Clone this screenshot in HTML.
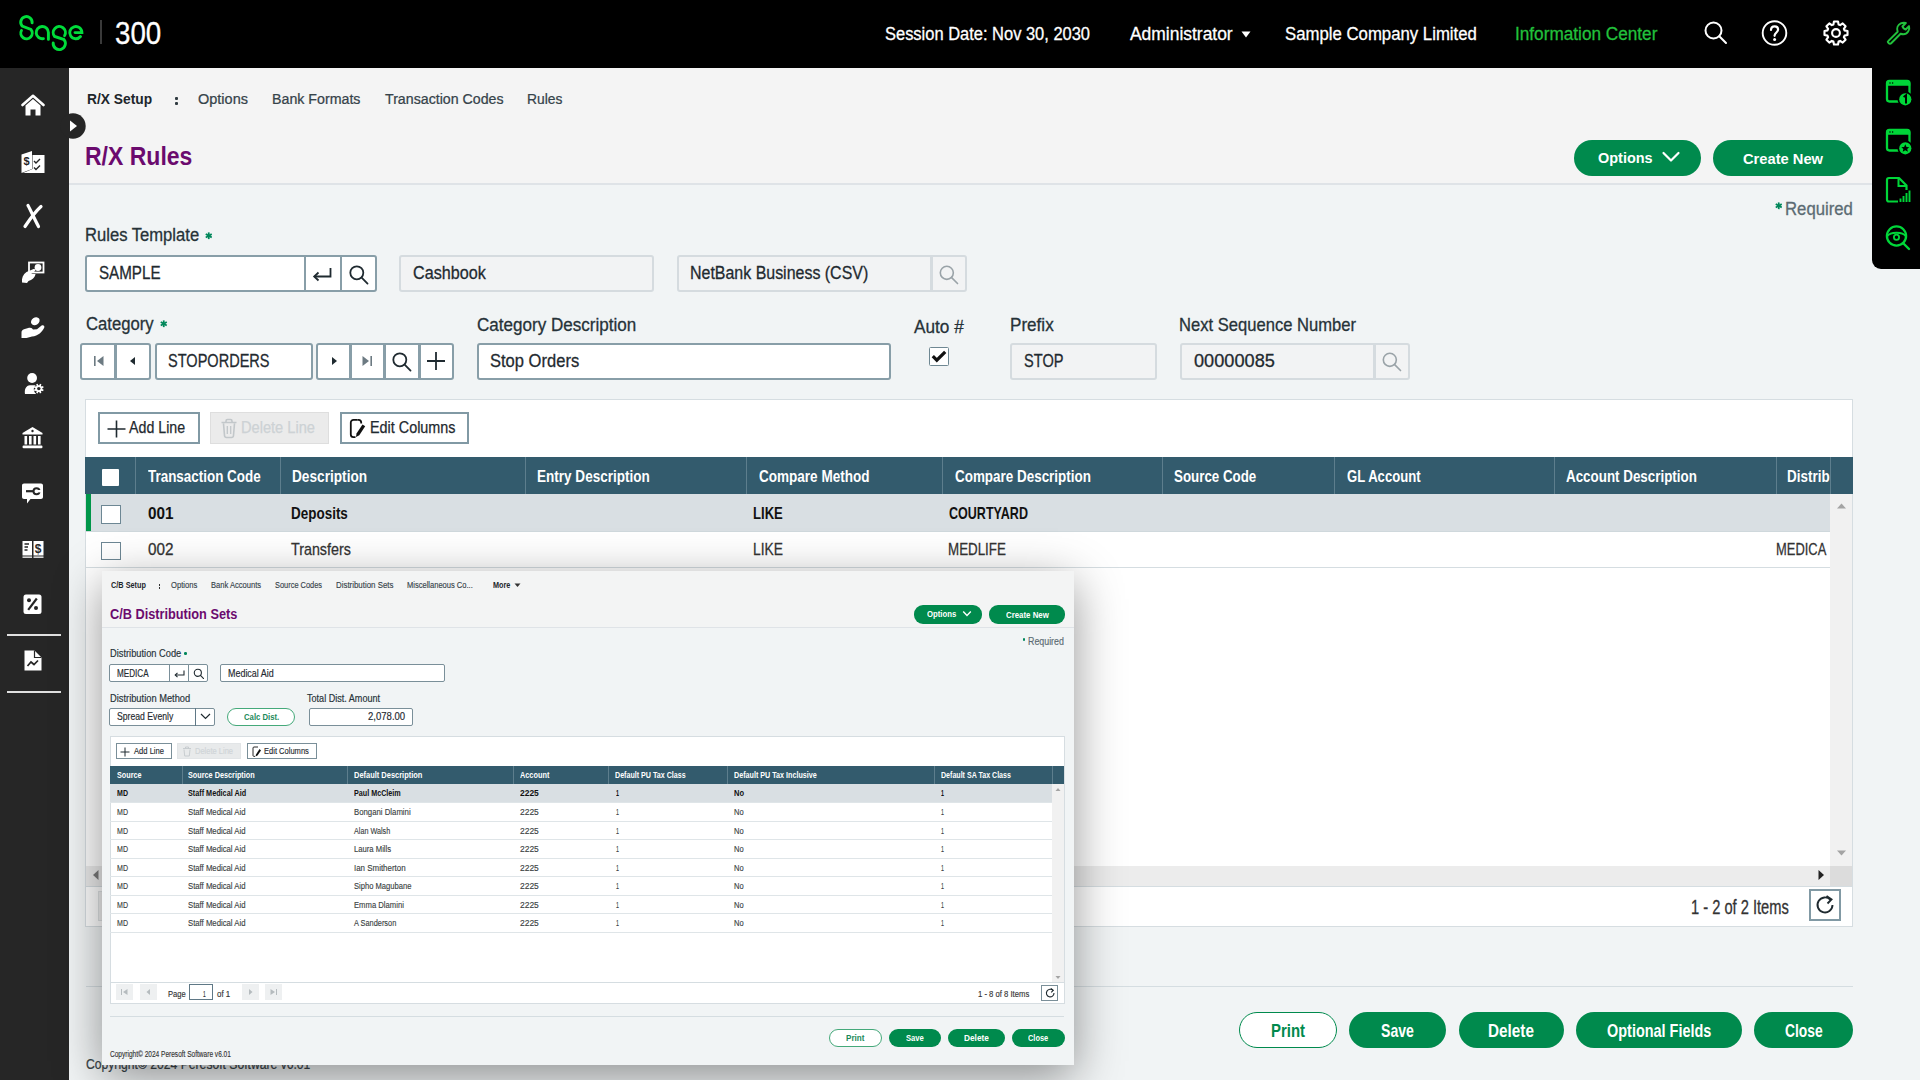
<!DOCTYPE html>
<html><head><meta charset="utf-8"><title>R/X Rules</title>
<style>
html,body{margin:0;padding:0;width:1920px;height:1080px;overflow:hidden;background:#f1f4f5;font-family:"Liberation Sans",sans-serif;position:relative}
.a{position:absolute;box-sizing:border-box;display:block}
.t{position:absolute;white-space:nowrap;line-height:1;transform-origin:0 0;font-family:"Liberation Sans",sans-serif}
#pop{position:absolute;left:102px;top:571px;width:972px;height:494px;background:#f1f4f5;box-shadow:0 12px 45px rgba(0,0,0,0.42);overflow:hidden}
</style></head><body>
<div class="a" style="left:0.00px;top:0.00px;width:1920.00px;height:68.00px;background:#000"></div>
<svg class="a" style="left:0.00px;top:0.00px;" width="100" height="60" viewBox="0 0 100 60"><g fill="none" stroke="#00dc3a" stroke-width="2.9" stroke-linecap="round">
<path d="M32.1 22.8 A5.7 5.7 0 1 0 22.1 26.0 L30.9 29.5 A5.7 5.7 0 1 1 21.5 30.4"/>
<path d="M43.4 38.6 A6.1 6.1 0 1 1 48.4 32.6 V39.4"/>
<path d="M64.6 35.65 A6.1 6.1 0 1 0 54.6 36.5 L64 39.6 A6.1 6.1 0 1 1 53.2 43.0"/>
<path d="M75 32.6 H81.9 A6.1 6.1 0 1 0 80.5 36.5"/>
</g></svg>
<div class="a" style="left:99.50px;top:20.00px;width:2.00px;height:24.00px;background:#3a3a3a"></div>
<span class="t" style="left:114.69px;top:18.32px;font-size:30.52px;font-weight:300;color:#ffffff;transform:scaleX(0.9092);-webkit-text-stroke:0.30px currentColor">300</span>
<span class="t" style="left:885.00px;top:24.68px;font-size:18.90px;font-weight:400;color:#ffffff;transform:scaleX(0.8716);-webkit-text-stroke:0.30px currentColor">Session Date:  Nov 30, 2030</span>
<span class="t" style="left:1129.75px;top:24.68px;font-size:18.90px;font-weight:400;color:#ffffff;transform:scaleX(0.9225);-webkit-text-stroke:0.30px currentColor">Administrator</span>
<svg class="a" style="left:1241.00px;top:31.00px;" width="10" height="7" viewBox="0 0 10 7"><path d="M0.5 0.5 H9.5 L5 6.5 Z" fill="#fff"/></svg>
<span class="t" style="left:1285.00px;top:24.68px;font-size:18.90px;font-weight:400;color:#ffffff;transform:scaleX(0.8872);-webkit-text-stroke:0.30px currentColor">Sample Company Limited</span>
<span class="t" style="left:1515.49px;top:24.68px;font-size:18.90px;font-weight:400;color:#22c13c;transform:scaleX(0.9101);-webkit-text-stroke:0.30px currentColor">Information Center</span>
<svg class="a" style="left:1703.00px;top:20.00px;" width="27" height="26" viewBox="0 0 27 26"><circle cx="10.5" cy="10.5" r="8" fill="none" stroke="#fff" stroke-width="2"/><path d="M16.3 16.3 L23 23" stroke="#fff" stroke-width="2" stroke-linecap="round"/></svg>
<svg class="a" style="left:1760.00px;top:19.00px;" width="29" height="29" viewBox="0 0 29 29"><circle cx="14.5" cy="14" r="11.8" fill="none" stroke="#fff" stroke-width="1.9"/><path d="M11 11 C11 8.7 12.6 7.3 14.6 7.3 C16.7 7.3 18.1 8.7 18.1 10.6 C18.1 13.2 14.9 13.6 14.6 16.3 V16.8" fill="none" stroke="#fff" stroke-width="2.2" stroke-linecap="round"/><circle cx="14.6" cy="20.4" r="1.5" fill="#fff"/></svg>
<svg class="a" style="left:1822.80px;top:19.70px;" width="26" height="26" viewBox="0 0 26 26"><polygon points="21.51,10.40 24.52,10.97 24.52,15.03 21.51,15.60 20.86,17.18 22.58,19.71 19.71,22.58 17.18,20.86 15.60,21.51 15.03,24.52 10.97,24.52 10.40,21.51 8.82,20.86 6.29,22.58 3.42,19.71 5.14,17.18 4.49,15.60 1.48,15.03 1.48,10.97 4.49,10.40 5.14,8.82 3.42,6.29 6.29,3.42 8.82,5.14 10.40,4.49 10.97,1.48 15.03,1.48 15.60,4.49 17.18,5.14 19.71,3.42 22.58,6.29 20.86,8.82" fill="none" stroke="#fff" stroke-width="2.1" stroke-linejoin="round"/><circle cx="13" cy="13" r="3.9" fill="none" stroke="#fff" stroke-width="2.1"/></svg>
<svg class="a" style="left:1884.00px;top:19.00px;" width="28" height="27" viewBox="0 0 28 27"><g transform="translate(1.5 1) scale(0.9)"><path d="M3 23.5 L13.5 13 C12.2 9.5 13.5 5.5 17 3.8 C19 2.8 21 2.8 22.6 3.3 L18.8 7.2 L20.2 9.3 L22.4 10.6 L26.1 6.8 C26.7 8.8 26.4 11 25.2 12.8 C23.3 15.6 19.8 16.4 16.8 15.3 L6.3 25.8 C5.6 26.5 4.4 26.5 3.7 25.8 L3 25.1 C2.4 24.6 2.4 24 3 23.5 Z" fill="none" stroke="#22c13c" stroke-width="2.2" stroke-linejoin="round"/></g></svg>
<div class="a" style="left:0.00px;top:68.00px;width:69.00px;height:1012.00px;background:#262626"></div>
<svg class="a" style="left:21.00px;top:94.00px;" width="24" height="23" viewBox="0 0 24 23"><path d="M1.5 11 L12 1.8 L22.5 11" fill="none" stroke="#fff" stroke-width="2.6" stroke-linecap="round" stroke-linejoin="round"/><path d="M4.5 11.5 L12 5 L19.5 11.5 V21.5 H14.5 V15.5 H9.5 V21.5 H4.5 Z" fill="#fff"/></svg>
<svg class="a" style="left:20.00px;top:149.00px;" width="26" height="26" viewBox="0 0 26 26"><path d="M1.5 5.5 L12 2 V20 L1.5 24 Z" fill="#fff"/><path d="M12.5 6 H24.5 V24 H3 L12.5 20 Z" fill="#fff"/><text x="3.5" y="15.5" font-size="11" font-family="Liberation Sans" font-weight="bold" fill="#262626">$</text><path d="M14 12 L16 14 L20 10 M14 18.5 L16 20.5 L20 16.5" stroke="#262626" stroke-width="1.4" fill="none"/></svg>
<svg class="a" style="left:22.00px;top:203.00px;" width="22" height="26" viewBox="0 0 22 26"><path d="M6 2.5 C9 8 13 17 16.5 23.5" stroke="#fff" stroke-width="3.2" stroke-linecap="round" fill="none"/><path d="M19 3.5 C14 8 8 16 3 23.5" stroke="#fff" stroke-width="3.2" stroke-linecap="round" fill="none"/></svg>
<svg class="a" style="left:20.00px;top:261.00px;" width="26" height="23" viewBox="0 0 26 23"><rect x="9" y="1.5" width="14.5" height="10" fill="none" stroke="#fff" stroke-width="1.8"/><circle cx="18" cy="6.5" r="3.4" fill="#fff"/><path d="M2 21.5 C1.5 17 3 13.5 6.5 11 L13.5 8 C15.5 7.5 16 9.5 14.5 10.5 L11 13 H15.5 C15 16.5 12 19 8.5 20 L7 22 Z" fill="#fff"/></svg>
<svg class="a" style="left:20.00px;top:315.00px;" width="26" height="25" viewBox="0 0 26 25"><ellipse cx="15.3" cy="6.2" rx="4.6" ry="3.7" transform="rotate(-35 15.3 6.2)" fill="#fff"/><path d="M1.5 23 V17.5 C1.5 15.8 2.5 14.8 4 14.3 L9 12.8 C11 12.3 12.5 13.2 13 14.6 L17 14.3 L21.3 10.8 C22.8 9.7 24.8 10.6 24.3 12.5 C22.6 16.7 18 21 12 21.6 L6.5 23 Z" fill="#fff"/></svg>
<svg class="a" style="left:23.00px;top:371.00px;" width="24" height="25" viewBox="0 0 24 25"><circle cx="9.1" cy="7" r="4.9" fill="#fff"/><path d="M2 23 C1.2 18.5 3 14.5 7 14.2 H12.8 C11.6 15.3 10.8 16.6 10.8 18.2 C10.8 20.2 11.8 21.9 13.3 23 Z" fill="#fff"/><polygon points="19.27,18.06 20.66,18.77 20.06,20.21 18.58,19.73 17.93,20.38 18.41,21.86 16.97,22.46 16.26,21.07 15.34,21.07 14.63,22.46 13.19,21.86 13.67,20.38 13.02,19.73 11.54,20.21 10.94,18.77 12.33,18.06 12.33,17.14 10.94,16.43 11.54,14.99 13.02,15.47 13.67,14.82 13.19,13.34 14.63,12.74 15.34,14.13 16.26,14.13 16.97,12.74 18.41,13.34 17.93,14.82 18.58,15.47 20.06,14.99 20.66,16.43 19.27,17.14" fill="#fff"/><circle cx="15.8" cy="17.6" r="1.7" fill="#262626"/></svg>
<svg class="a" style="left:21.00px;top:426.00px;" width="23" height="23" viewBox="0 0 23 23"><path d="M1.5 7 L11.5 1 L21.5 7 V8.5 H1.5 Z" fill="#fff"/><rect x="3.5" y="10" width="2.6" height="8.5" fill="#fff"/><rect x="8" y="10" width="2.6" height="8.5" fill="#fff"/><rect x="12.5" y="10" width="2.6" height="8.5" fill="#fff"/><rect x="17" y="10" width="2.6" height="8.5" fill="#fff"/><rect x="1.5" y="19.5" width="20" height="2.8" rx="1.2" fill="#fff"/><circle cx="11.5" cy="5" r="1.2" fill="#262626"/></svg>
<svg class="a" style="left:21.00px;top:482.00px;" width="23" height="24" viewBox="0 0 23 24"><path d="M3 1.5 H20 C21.2 1.5 22 2.3 22 3.5 V15 C22 16.2 21.2 17 20 17 H9.5 L6 21.5 V17 H3 C1.8 17 1 16.2 1 15 V3.5 C1 2.3 1.8 1.5 3 1.5 Z" fill="#fff"/><path d="M5 9.2 H13" stroke="#262626" stroke-width="2.2"/><circle cx="15.5" cy="9.2" r="3" fill="none" stroke="#262626" stroke-width="2"/><rect x="16.5" y="8" width="4" height="2.4" fill="#fff"/></svg>
<svg class="a" style="left:21.00px;top:539.00px;" width="24" height="20" viewBox="0 0 24 20"><path d="M1.5 2 H11 V16.5 H1.5 Z M12.5 2 H22.5 V16.5 H12.5 Z" fill="#fff"/><rect x="1.5" y="17.5" width="9.5" height="1.3" fill="#fff"/><rect x="12.5" y="17.5" width="10" height="1.3" fill="#fff"/><path d="M3.5 5 H8 M3.5 8 H7 M3.5 11 H6.5" stroke="#262626" stroke-width="1.3"/><text x="13.8" y="14" font-size="12" font-weight="bold" font-family="Liberation Sans" fill="#262626">$</text></svg>
<svg class="a" style="left:22.00px;top:593.00px;" width="21" height="23" viewBox="0 0 21 23"><rect x="1.5" y="1.5" width="18" height="19.5" rx="2.5" fill="#fff"/><circle cx="7" cy="7.3" r="2" fill="#262626"/><circle cx="14" cy="15" r="2" fill="#262626"/><path d="M14.8 5.5 L6.2 16.8" stroke="#262626" stroke-width="2.2"/></svg>
<div class="a" style="left:7.00px;top:633.50px;width:54.00px;height:2.00px;background:#e0e0e0"></div>
<svg class="a" style="left:23.00px;top:649.00px;" width="20" height="23" viewBox="0 0 20 23"><path d="M1.5 1.5 H11.5 L18.5 8.5 V21.5 H1.5 Z" fill="#fff"/><path d="M11.5 1.5 V8.5 H18.5" fill="none" stroke="#262626" stroke-width="1.2"/><path d="M4.5 17 L8 13 L11 15.5 L15 11.5" fill="none" stroke="#262626" stroke-width="1.7"/></svg>
<div class="a" style="left:7.00px;top:690.50px;width:54.00px;height:2.00px;background:#e0e0e0"></div>
<div class="a" style="left:69.00px;top:68.00px;width:1803.00px;height:116.00px;background:#f4f4f4"></div>
<div class="a" style="left:69.00px;top:183.30px;width:1803.00px;height:1.50px;background:#dfe3e7"></div>
<svg class="a" style="left:59.50px;top:113.00px;" width="26" height="26" viewBox="0 0 26 26"><circle cx="13" cy="13" r="12.7" fill="#262626"/><path d="M10 7.5 L17 13 L10 18.5 Z" fill="#fff"/></svg>
<span class="t" style="left:86.82px;top:92.07px;font-size:14.90px;font-weight:700;color:#1d262b;transform:scaleX(0.9268)">R/X Setup</span>
<div class="a" style="left:175.00px;top:97.30px;width:3.30px;height:3.00px;background:#303b41;border-radius:1px"></div>
<div class="a" style="left:175.00px;top:101.50px;width:3.30px;height:3.00px;background:#303b41;border-radius:1px"></div>
<span class="t" style="left:198.00px;top:92.07px;font-size:14.90px;font-weight:400;color:#36434a;transform:scaleX(0.9739);-webkit-text-stroke:0.24px currentColor">Options</span>
<span class="t" style="left:272.05px;top:92.07px;font-size:14.90px;font-weight:400;color:#36434a;transform:scaleX(0.9545);-webkit-text-stroke:0.24px currentColor">Bank Formats</span>
<span class="t" style="left:385.00px;top:92.07px;font-size:14.90px;font-weight:400;color:#36434a;transform:scaleX(0.9527);-webkit-text-stroke:0.24px currentColor">Transaction Codes</span>
<span class="t" style="left:527.07px;top:92.07px;font-size:14.90px;font-weight:400;color:#36434a;transform:scaleX(0.9292);-webkit-text-stroke:0.24px currentColor">Rules</span>
<span class="t" style="left:84.92px;top:142.81px;font-size:26.16px;font-weight:700;color:#6b0a6e;transform:scaleX(0.8793)">R/X Rules</span>
<div class="a" style="left:1574.00px;top:140.00px;width:127.00px;height:36.00px;background:#008a4d;border-radius:18px"></div>
<span class="t" style="left:1598.00px;top:150.43px;font-size:15.41px;font-weight:700;color:#fff;transform:scaleX(0.9379)">Options</span>
<svg class="a" style="left:1661.00px;top:150.00px;" width="20" height="14" viewBox="0 0 20 14"><path d="M2.5 3 L10 10.5 L17.5 3" fill="none" stroke="#fff" stroke-width="2.2" stroke-linecap="round" stroke-linejoin="round"/></svg>
<div class="a" style="left:1713.00px;top:140.00px;width:140.00px;height:36.00px;background:#008a4d;border-radius:18px"></div>
<span class="t" style="left:1743.00px;top:150.73px;font-size:15.41px;font-weight:700;color:#fff;transform:scaleX(0.9540)">Create New</span>
<div class="a" style="left:1872.00px;top:68.00px;width:48.00px;height:201.00px;background:#000;border-bottom-left-radius:9px"></div>
<svg class="a" style="left:1884.00px;top:77.50px;" width="30" height="30" viewBox="0 0 30 30"><rect x="3" y="3" width="22.5" height="20.5" rx="2.4" fill="none" stroke="#00d639" stroke-width="2.3"/><path d="M3 7 V5.4 C3 4 4 3 5.4 3 H23.1 C24.5 3 25.5 4 25.5 5.4 V7 Z" fill="#00d639" stroke="#00d639" stroke-width="1.5"/><circle cx="6" cy="5" r="0.75" fill="#000"/><circle cx="8.6" cy="5" r="0.75" fill="#000"/><circle cx="21.3" cy="21.3" r="7.8" fill="#000"/><circle cx="21.3" cy="21.3" r="6.1" fill="#00d639"/><path d="M19.6 19 L22 17.3 V25.5" stroke="#000" stroke-width="2" fill="none"/></svg>
<svg class="a" style="left:1884.00px;top:127.00px;" width="30" height="30" viewBox="0 0 30 30"><rect x="3" y="3" width="22.5" height="20.5" rx="2.4" fill="none" stroke="#00d639" stroke-width="2.3"/><path d="M3 7 V5.4 C3 4 4 3 5.4 3 H23.1 C24.5 3 25.5 4 25.5 5.4 V7 Z" fill="#00d639" stroke="#00d639" stroke-width="1.5"/><circle cx="6" cy="5" r="0.75" fill="#000"/><circle cx="8.6" cy="5" r="0.75" fill="#000"/><circle cx="21.3" cy="21.3" r="7.8" fill="#000"/><circle cx="21.3" cy="21.3" r="6.1" fill="#00d639"/><path d="M21.3 17.3 L22.5 20 L25.3 20.2 L23.2 22 L23.9 24.8 L21.3 23.3 L18.7 24.8 L19.4 22 L17.3 20.2 L20.1 20 Z" fill="#000"/></svg>
<svg class="a" style="left:1884.00px;top:175.00px;" width="30" height="30" viewBox="0 0 30 30"><path d="M14 26.5 H5 C3.8 26.5 3 25.7 3 24.5 V5 C3 3.8 3.8 3 5 3 H15 L22.5 10.5 V15" fill="none" stroke="#00d639" stroke-width="2.2" stroke-linejoin="round"/><path d="M14.5 3.5 V11 H22" fill="none" stroke="#00d639" stroke-width="2"/><path d="M16.5 27 V23.5 M19.5 27 V21 M22.5 27 V18 M25.5 27 V15.5" stroke="#00d639" stroke-width="1.9"/></svg>
<svg class="a" style="left:1884.00px;top:224.00px;" width="30" height="30" viewBox="0 0 30 30"><circle cx="12.5" cy="12" r="9.6" fill="none" stroke="#00d639" stroke-width="2.3"/><path d="M3.5 12 C6 7.5 19 7.5 21.5 12" fill="none" stroke="#00d639" stroke-width="2"/><circle cx="12.5" cy="13.2" r="2.6" fill="none" stroke="#00d639" stroke-width="1.8"/><path d="M19 19 L25 25" stroke="#00d639" stroke-width="2.4" stroke-linecap="round"/></svg>
<svg class="a" style="left:1774.50px;top:202.00px;" width="7.5" height="7.5" viewBox="0 0 7.5 7.5"><g stroke="#00875a" stroke-width="1.80" stroke-linecap="butt"><path d="M3.75 0.375 V7.125"/><path d="M0.75 2.0250000000000004 L6.75 5.475"/><path d="M0.75 5.475 L6.75 2.0250000000000004"/></g></svg>
<span class="t" style="left:1785.11px;top:199.68px;font-size:18.90px;font-weight:400;color:#5b6b73;transform:scaleX(0.8855);-webkit-text-stroke:0.30px currentColor">Required</span>
<span class="t" style="left:84.72px;top:226.48px;font-size:18.90px;font-weight:400;color:#263238;transform:scaleX(0.8788);-webkit-text-stroke:0.30px currentColor">Rules Template</span>
<svg class="a" style="left:204.50px;top:232.00px;" width="7.5" height="7.5" viewBox="0 0 7.5 7.5"><g stroke="#00875a" stroke-width="1.80" stroke-linecap="butt"><path d="M3.75 0.375 V7.125"/><path d="M0.75 2.0250000000000004 L6.75 5.475"/><path d="M0.75 5.475 L6.75 2.0250000000000004"/></g></svg>
<div class="a" style="left:85.00px;top:255.00px;width:221.00px;height:37.00px;background:#fff;border:2px solid #889ea8;border-radius:3px 0 0 3px"></div>
<div class="a" style="left:304.00px;top:255.00px;width:37.50px;height:37.00px;background:#fff;border:2px solid #889ea8;"></div>
<div class="a" style="left:339.50px;top:255.00px;width:37.00px;height:37.00px;background:#fff;border:2px solid #889ea8;border-radius:0 3px 3px 0"></div>
<svg class="a" style="left:311.00px;top:264.00px;" width="22" height="20" viewBox="0 0 22 20"><path d="M19.5 4 V12.5 H3.5" fill="none" stroke="#1f2a30" stroke-width="1.8"/><path d="M7.5 8.5 L3.2 12.5 L7.5 16.5" fill="none" stroke="#1f2a30" stroke-width="1.8"/></svg>
<svg class="a" style="left:347.50px;top:263.50px;" width="21" height="21" viewBox="0 0 21 21"><circle cx="8.82" cy="8.82" r="6.51" fill="none" stroke="#1f2a30" stroke-width="1.8"/><path d="M13.65 13.65 L19.53 19.53" stroke="#1f2a30" stroke-width="1.8" stroke-linecap="round"/></svg>
<span class="t" style="left:98.75px;top:264.28px;font-size:18.90px;font-weight:400;color:#1f2a30;transform:scaleX(0.8027);-webkit-text-stroke:0.30px currentColor">SAMPLE</span>
<div class="a" style="left:399.00px;top:255.00px;width:255.00px;height:37.00px;background:#f2f3f4;border:2px solid #d5dbdf;border-radius:3px"></div>
<span class="t" style="left:412.80px;top:264.28px;font-size:18.90px;font-weight:400;color:#1f2a30;transform:scaleX(0.8556);-webkit-text-stroke:0.30px currentColor">Cashbook</span>
<div class="a" style="left:677.00px;top:255.00px;width:254.50px;height:37.00px;background:#f2f3f4;border:2px solid #d5dbdf;border-radius:3px 0 0 3px"></div>
<div class="a" style="left:930.50px;top:255.00px;width:36.50px;height:37.00px;background:#f2f3f4;border:2px solid #d5dbdf;border-radius:0 3px 3px 0"></div>
<svg class="a" style="left:938.00px;top:263.50px;" width="21" height="21" viewBox="0 0 21 21"><circle cx="8.82" cy="8.82" r="6.51" fill="none" stroke="#9aa3a8" stroke-width="1.6"/><path d="M13.65 13.65 L19.53 19.53" stroke="#9aa3a8" stroke-width="1.6" stroke-linecap="round"/></svg>
<span class="t" style="left:689.66px;top:263.88px;font-size:18.90px;font-weight:400;color:#1f2a30;transform:scaleX(0.8446);-webkit-text-stroke:0.30px currentColor">NetBank Business (CSV)</span>
<span class="t" style="left:85.60px;top:314.68px;font-size:18.90px;font-weight:400;color:#263238;transform:scaleX(0.8814);-webkit-text-stroke:0.30px currentColor">Category</span>
<svg class="a" style="left:160.00px;top:320.00px;" width="7.5" height="7.5" viewBox="0 0 7.5 7.5"><g stroke="#00875a" stroke-width="1.80" stroke-linecap="butt"><path d="M3.75 0.375 V7.125"/><path d="M0.75 2.0250000000000004 L6.75 5.475"/><path d="M0.75 5.475 L6.75 2.0250000000000004"/></g></svg>
<span class="t" style="left:477.00px;top:315.68px;font-size:18.90px;font-weight:400;color:#263238;transform:scaleX(0.9024);-webkit-text-stroke:0.30px currentColor">Category Description</span>
<span class="t" style="left:914.00px;top:318.42px;font-size:18.02px;font-weight:400;color:#263238;transform:scaleX(0.9546);-webkit-text-stroke:0.28px currentColor">Auto #</span>
<span class="t" style="left:1009.87px;top:315.67px;font-size:18.31px;font-weight:400;color:#263238;transform:scaleX(0.9338);-webkit-text-stroke:0.29px currentColor">Prefix</span>
<span class="t" style="left:1179.09px;top:315.77px;font-size:18.31px;font-weight:400;color:#263238;transform:scaleX(0.9064);-webkit-text-stroke:0.29px currentColor">Next Sequence Number</span>
<div class="a" style="left:80.00px;top:343.00px;width:36.00px;height:37.00px;background:#fff;border:2px solid #889ea8;border-radius:3px 0 0 3px"></div>
<div class="a" style="left:115.00px;top:343.00px;width:36.00px;height:37.00px;background:#fff;border:2px solid #889ea8;border-radius:0 3px 3px 0"></div>
<svg class="a" style="left:93.00px;top:355.00px;" width="12" height="12" viewBox="0 0 12 12"><rect x="1" y="1" width="1.6" height="10" fill="#6c7a82"/><path d="M10.5 1 V11 L4 6 Z" fill="#6c7a82"/></svg>
<svg class="a" style="left:127.00px;top:355.00px;" width="12" height="12" viewBox="0 0 12 12"><path d="M8 2 V10 L3 6 Z" fill="#1f2a30"/></svg>
<div class="a" style="left:155.00px;top:343.00px;width:158.00px;height:37.00px;background:#fff;border:2px solid #889ea8;border-radius:3px"></div>
<span class="t" style="left:168.40px;top:351.58px;font-size:18.90px;font-weight:400;color:#1f2a30;transform:scaleX(0.7697);-webkit-text-stroke:0.30px currentColor">STOPORDERS</span>
<div class="a" style="left:316.00px;top:343.00px;width:35.00px;height:37.00px;background:#fff;border:2px solid #889ea8;border-radius:3px 0 0 3px"></div>
<div class="a" style="left:350.00px;top:343.00px;width:35.00px;height:37.00px;background:#fff;border:2px solid #889ea8;"></div>
<div class="a" style="left:384.00px;top:343.00px;width:36.00px;height:37.00px;background:#fff;border:2px solid #889ea8;"></div>
<div class="a" style="left:419.00px;top:343.00px;width:35.00px;height:37.00px;background:#fff;border:2px solid #889ea8;border-radius:0 3px 3px 0"></div>
<svg class="a" style="left:328.00px;top:355.00px;" width="12" height="12" viewBox="0 0 12 12"><path d="M4 2 V10 L9 6 Z" fill="#1f2a30"/></svg>
<svg class="a" style="left:361.00px;top:355.00px;" width="12" height="12" viewBox="0 0 12 12"><path d="M1.5 1 V11 L8 6 Z" fill="#6c7a82"/><rect x="9.4" y="1" width="1.6" height="10" fill="#6c7a82"/></svg>
<svg class="a" style="left:391.00px;top:350.50px;" width="21" height="21" viewBox="0 0 21 21"><circle cx="8.82" cy="8.82" r="6.51" fill="none" stroke="#1f2a30" stroke-width="1.8"/><path d="M13.65 13.65 L19.53 19.53" stroke="#1f2a30" stroke-width="1.8" stroke-linecap="round"/></svg>
<svg class="a" style="left:425.00px;top:350.00px;" width="22" height="22" viewBox="0 0 22 22"><path d="M11 2 V20 M2 11 H20" stroke="#1f2a30" stroke-width="1.8"/></svg>
<div class="a" style="left:477.00px;top:343.00px;width:414.00px;height:37.00px;background:#fff;border:2px solid #889ea8;border-radius:3px"></div>
<span class="t" style="left:490.30px;top:351.58px;font-size:18.90px;font-weight:400;color:#1f2a30;transform:scaleX(0.8754);-webkit-text-stroke:0.30px currentColor">Stop Orders</span>
<div class="a" style="left:929.00px;top:346.50px;width:19.50px;height:19.50px;background:#fff;border:1.7px solid #6f8893;border-radius:1.5px"></div>
<svg class="a" style="left:930.00px;top:347.00px;" width="18" height="18" viewBox="0 0 18 18"><path d="M2.8 9.2 L6.8 13.2 L15.2 4.8" fill="none" stroke="#111" stroke-width="3.2"/></svg>
<div class="a" style="left:1010.00px;top:343.00px;width:147.00px;height:37.00px;background:#f2f3f4;border:2px solid #d5dbdf;border-radius:3px"></div>
<span class="t" style="left:1023.60px;top:351.58px;font-size:18.90px;font-weight:400;color:#1f2a30;transform:scaleX(0.7729);-webkit-text-stroke:0.30px currentColor">STOP</span>
<div class="a" style="left:1180.00px;top:343.00px;width:195.00px;height:37.00px;background:#f2f3f4;border:2px solid #d5dbdf;border-radius:3px 0 0 3px"></div>
<div class="a" style="left:1374.00px;top:343.00px;width:36.00px;height:37.00px;background:#f2f3f4;border:2px solid #d5dbdf;border-radius:0 3px 3px 0"></div>
<svg class="a" style="left:1381.00px;top:350.50px;" width="21" height="21" viewBox="0 0 21 21"><circle cx="8.82" cy="8.82" r="6.51" fill="none" stroke="#9aa3a8" stroke-width="1.6"/><path d="M13.65 13.65 L19.53 19.53" stroke="#9aa3a8" stroke-width="1.6" stroke-linecap="round"/></svg>
<span class="t" style="left:1193.60px;top:351.58px;font-size:18.90px;font-weight:400;color:#1f2a30;transform:scaleX(0.9619);-webkit-text-stroke:0.30px currentColor">00000085</span>
<div class="a" style="left:85.00px;top:399.00px;width:1768.00px;height:528.00px;background:#fff;border:1px solid #d6dde1"></div>
<div class="a" style="left:98.00px;top:412.00px;width:102.00px;height:32.00px;background:#fff;border:2px solid #8199a4;"></div>
<svg class="a" style="left:106.50px;top:419.50px;" width="19" height="18" viewBox="0 0 19 18"><path d="M9.5 0.5 V17.5 M0.5 9 H18.5" stroke="#1f2a30" stroke-width="1.6"/></svg>
<span class="t" style="left:129.40px;top:420.44px;font-size:15.99px;font-weight:400;color:#1f2a30;transform:scaleX(0.8898);-webkit-text-stroke:0.25px currentColor">Add Line</span>
<div class="a" style="left:210.00px;top:412.00px;width:119.00px;height:32.00px;background:#ebebeb;border:1px solid #dedede"></div>
<svg class="a" style="left:219.50px;top:417.50px;" width="18" height="21" viewBox="0 0 18 21"><path d="M1.5 4.5 H16.5 M6 4.5 V3 C6 2.2 6.7 1.5 7.5 1.5 H10.5 C11.3 1.5 12 2.2 12 3 V4.5 M3.5 5.5 L4.5 17.5 C4.6 18.6 5.4 19.5 6.5 19.5 H11.5 C12.6 19.5 13.4 18.6 13.5 17.5 L14.5 5.5" fill="none" stroke="#c2c7ca" stroke-width="1.6"/><path d="M7.3 8 V16 M10.7 8 V16" stroke="#c2c7ca" stroke-width="1.3"/></svg>
<span class="t" style="left:241.09px;top:420.44px;font-size:15.99px;font-weight:400;color:#cdd2d5;transform:scaleX(0.9136);-webkit-text-stroke:0.25px currentColor">Delete Line</span>
<div class="a" style="left:340.00px;top:412.00px;width:129.00px;height:32.00px;background:#fff;border:2px solid #8199a4;"></div>
<svg class="a" style="left:349.00px;top:417.50px;" width="18" height="21" viewBox="0 0 18 21"><path d="M8.5 1.8 H4.5 C3 1.8 1.8 3 1.8 4.5 V16.5 C1.8 18 3 19.2 4.5 19.2 H6.5" fill="none" stroke="#111" stroke-width="1.8"/><path d="M8.5 1.8 H9.5 C11 1.8 12.2 3 12.2 4.5 V5.5" fill="none" stroke="#111" stroke-width="1.8"/><path d="M13.5 6.5 L7.5 15.5 L7 19 L10.3 17.3 L16.2 8.3 Z" fill="#111"/></svg>
<span class="t" style="left:369.90px;top:420.44px;font-size:15.99px;font-weight:400;color:#1f2a30;transform:scaleX(0.8991);-webkit-text-stroke:0.25px currentColor">Edit Columns</span>
<div class="a" style="left:85.00px;top:457.00px;width:1768.00px;height:37.00px;background:#335b6d"></div>
<div class="a" style="left:102.00px;top:469.00px;width:16.50px;height:17.00px;background:#fff;border-radius:1px"></div>
<div class="a" style="left:134.50px;top:457.00px;width:1.20px;height:37.00px;background:#5d7e8d"></div>
<div class="a" style="left:280.00px;top:457.00px;width:1.20px;height:37.00px;background:#5d7e8d"></div>
<div class="a" style="left:525.00px;top:457.00px;width:1.20px;height:37.00px;background:#5d7e8d"></div>
<div class="a" style="left:745.50px;top:457.00px;width:1.20px;height:37.00px;background:#5d7e8d"></div>
<div class="a" style="left:941.50px;top:457.00px;width:1.20px;height:37.00px;background:#5d7e8d"></div>
<div class="a" style="left:1161.50px;top:457.00px;width:1.20px;height:37.00px;background:#5d7e8d"></div>
<div class="a" style="left:1333.50px;top:457.00px;width:1.20px;height:37.00px;background:#5d7e8d"></div>
<div class="a" style="left:1554.00px;top:457.00px;width:1.20px;height:37.00px;background:#5d7e8d"></div>
<div class="a" style="left:1775.50px;top:457.00px;width:1.20px;height:37.00px;background:#5d7e8d"></div>
<div class="a" style="left:1830.00px;top:457.00px;width:1.20px;height:37.00px;background:#5d7e8d"></div>
<span class="t" style="left:148.40px;top:467.68px;font-size:17.01px;font-weight:700;color:#fff;transform:scaleX(0.7898)">Transaction Code</span>
<span class="t" style="left:292.20px;top:467.68px;font-size:17.01px;font-weight:700;color:#fff;transform:scaleX(0.8032)">Description</span>
<span class="t" style="left:537.20px;top:467.68px;font-size:17.01px;font-weight:700;color:#fff;transform:scaleX(0.7961)">Entry Description</span>
<span class="t" style="left:758.75px;top:467.68px;font-size:17.01px;font-weight:700;color:#fff;transform:scaleX(0.7959)">Compare Method</span>
<span class="t" style="left:955.00px;top:467.68px;font-size:17.01px;font-weight:700;color:#fff;transform:scaleX(0.7905)">Compare Description</span>
<span class="t" style="left:1173.75px;top:467.68px;font-size:17.01px;font-weight:700;color:#fff;transform:scaleX(0.7845)">Source Code</span>
<span class="t" style="left:1347.00px;top:467.68px;font-size:17.01px;font-weight:700;color:#fff;transform:scaleX(0.7717)">GL Account</span>
<span class="t" style="left:1566.00px;top:467.68px;font-size:17.01px;font-weight:700;color:#fff;transform:scaleX(0.7874)">Account Description</span>
<div class="a" style="left:1776.5px;top:457px;width:53.5px;height:37px;overflow:hidden">
<span class="t" style="left:10.71px;top:10.68px;font-size:17.01px;font-weight:700;color:#fff;transform:scaleX(0.7912)">Distrib</span>
</div>
<div class="a" style="left:86.00px;top:494.00px;width:1744.00px;height:37.00px;background:#d9dfe3"></div>
<div class="a" style="left:86.00px;top:494.00px;width:5.00px;height:37.00px;background:#009649"></div>
<div class="a" style="left:86.00px;top:530.50px;width:1744.00px;height:1.00px;background:#cfd8dc"></div>
<div class="a" style="left:101.00px;top:504.50px;width:19.50px;height:19.50px;background:#fff;border:1.2px solid #6d8794"></div>
<span class="t" style="left:147.70px;top:505.28px;font-size:17.01px;font-weight:700;color:#111;transform:scaleX(0.8993)">001</span>
<span class="t" style="left:290.51px;top:505.28px;font-size:17.01px;font-weight:700;color:#111;transform:scaleX(0.7919)">Deposits</span>
<span class="t" style="left:753.23px;top:505.28px;font-size:17.01px;font-weight:700;color:#111;transform:scaleX(0.7704)">LIKE</span>
<span class="t" style="left:948.75px;top:505.28px;font-size:17.01px;font-weight:700;color:#111;transform:scaleX(0.7376)">COURTYARD</span>
<div class="a" style="left:101.00px;top:541.60px;width:19.50px;height:18.90px;background:#fff;border:1.2px solid #6d8794"></div>
<span class="t" style="left:147.70px;top:540.98px;font-size:17.01px;font-weight:400;color:#333;transform:scaleX(0.8993);-webkit-text-stroke:0.27px currentColor">002</span>
<span class="t" style="left:291.30px;top:540.98px;font-size:17.01px;font-weight:400;color:#333;transform:scaleX(0.8406);-webkit-text-stroke:0.27px currentColor">Transfers</span>
<span class="t" style="left:753.19px;top:540.98px;font-size:17.01px;font-weight:400;color:#333;transform:scaleX(0.8109);-webkit-text-stroke:0.27px currentColor">LIKE</span>
<span class="t" style="left:947.96px;top:540.98px;font-size:17.01px;font-weight:400;color:#333;transform:scaleX(0.7859);-webkit-text-stroke:0.27px currentColor">MEDLIFE</span>
<span class="t" style="left:1776.14px;top:540.98px;font-size:17.01px;font-weight:400;color:#333;transform:scaleX(0.7601);-webkit-text-stroke:0.27px currentColor">MEDICA</span>
<div class="a" style="left:86.00px;top:566.50px;width:1744.00px;height:1.00px;background:#d5dde1"></div>
<div class="a" style="left:1830.00px;top:494.00px;width:22.00px;height:372.00px;background:#f1f1f1"></div>
<svg class="a" style="left:1836.00px;top:502.00px;" width="11" height="8" viewBox="0 0 11 8"><path d="M1 6.5 L5.5 1.5 L10 6.5 Z" fill="#a4a4a4"/></svg>
<svg class="a" style="left:1836.00px;top:849.00px;" width="11" height="8" viewBox="0 0 11 8"><path d="M1 1.5 L5.5 6.5 L10 1.5 Z" fill="#a4a4a4"/></svg>
<div class="a" style="left:86.00px;top:866.00px;width:1744.00px;height:20.00px;background:#ececec"></div>
<div class="a" style="left:1830.00px;top:866.00px;width:22.00px;height:20.00px;background:#dcdcdc"></div>
<svg class="a" style="left:91.00px;top:869.00px;" width="10" height="12" viewBox="0 0 10 12"><path d="M7.5 1 V11 L2 6 Z" fill="#7a7a7a"/></svg>
<svg class="a" style="left:1816.00px;top:869.00px;" width="10" height="12" viewBox="0 0 10 12"><path d="M2.5 1 V11 L8 6 Z" fill="#222"/></svg>
<div class="a" style="left:86.00px;top:885.50px;width:1766.00px;height:1.00px;background:#d5dde1"></div>
<div class="a" style="left:98.00px;top:891.00px;width:34.00px;height:30.00px;background:#f0f0f0;border:1px solid #dfe3e5"></div>
<span class="t" style="left:1690.75px;top:898.08px;font-size:19.48px;font-weight:400;color:#333;transform:scaleX(0.7528);-webkit-text-stroke:0.30px currentColor">1 - 2 of 2 Items</span>
<div class="a" style="left:1809.00px;top:889.00px;width:32.00px;height:32.00px;background:#fff;border:2px solid #8199a4"></div>
<svg class="a" style="left:1813.00px;top:893.00px;" width="24" height="24" viewBox="0 0 24 24"><path d="M17.5 6.8 A7.5 7.5 0 1 0 19.5 12" fill="none" stroke="#1f2a30" stroke-width="1.9"/><path d="M13.5 3 L18.5 6.5 L14.5 10.5" fill="none" stroke="#1f2a30" stroke-width="1.9"/></svg>
<span class="t" style="left:85.50px;top:1056.97px;font-size:14.53px;font-weight:400;color:#3a4449;transform:scaleX(0.8369);-webkit-text-stroke:0.23px currentColor">Copyright© 2024 Peresoft Software v6.01</span>
<div class="a" style="left:86.00px;top:986.00px;width:1767.00px;height:1.00px;background:#d5dde1"></div>
<div class="a" style="left:1239.00px;top:1012.40px;width:98.00px;height:36.10px;background:#fff;border:1.5px solid #008a4d;border-radius:18px"></div>
<span class="t" style="left:1271.08px;top:1022.29px;font-size:18.17px;font-weight:700;color:#008a4d;transform:scaleX(0.8211)">Print</span>
<div class="a" style="left:1349.00px;top:1012.40px;width:97.20px;height:36.10px;background:#008a4d;border-radius:18px"></div>
<span class="t" style="left:1381.00px;top:1022.29px;font-size:18.17px;font-weight:700;color:#fff;transform:scaleX(0.7753)">Save</span>
<div class="a" style="left:1458.60px;top:1012.40px;width:105.40px;height:36.10px;background:#008a4d;border-radius:18px"></div>
<span class="t" style="left:1488.16px;top:1022.29px;font-size:18.17px;font-weight:700;color:#fff;transform:scaleX(0.8427)">Delete</span>
<div class="a" style="left:1576.40px;top:1012.40px;width:165.60px;height:36.10px;background:#008a4d;border-radius:18px"></div>
<span class="t" style="left:1607.40px;top:1022.29px;font-size:18.17px;font-weight:700;color:#fff;transform:scaleX(0.7959)">Optional Fields</span>
<div class="a" style="left:1754.30px;top:1012.40px;width:98.70px;height:36.10px;background:#008a4d;border-radius:18px"></div>
<span class="t" style="left:1784.70px;top:1022.29px;font-size:18.17px;font-weight:700;color:#fff;transform:scaleX(0.7620)">Close</span>
<div id="pop">
<div class="a" style="left:0.00px;top:0.00px;width:972.00px;height:56.50px;background:#f3f4f4"></div>
<div class="a" style="left:0.00px;top:56.00px;width:972.00px;height:1.00px;background:#dfe3e7"></div>
<span class="t" style="left:8.80px;top:10.30px;font-size:8.72px;font-weight:700;color:#1d262b;transform:scaleX(0.8396)">C/B Setup</span>
<div class="a" style="left:56.50px;top:13.00px;width:1.50px;height:1.50px;background:#333"></div>
<div class="a" style="left:56.50px;top:16.00px;width:1.50px;height:1.50px;background:#333"></div>
<span class="t" style="left:68.70px;top:10.30px;font-size:8.72px;font-weight:400;color:#36434a;transform:scaleX(0.8733);-webkit-text-stroke:0.14px currentColor">Options</span>
<span class="t" style="left:109.00px;top:10.30px;font-size:8.72px;font-weight:400;color:#36434a;transform:scaleX(0.8674);-webkit-text-stroke:0.14px currentColor">Bank Accounts</span>
<span class="t" style="left:172.90px;top:10.30px;font-size:8.72px;font-weight:400;color:#36434a;transform:scaleX(0.8517);-webkit-text-stroke:0.14px currentColor">Source Codes</span>
<span class="t" style="left:234.00px;top:10.30px;font-size:8.72px;font-weight:400;color:#36434a;transform:scaleX(0.9046);-webkit-text-stroke:0.14px currentColor">Distribution Sets</span>
<span class="t" style="left:304.90px;top:10.30px;font-size:8.72px;font-weight:400;color:#36434a;transform:scaleX(0.8644);-webkit-text-stroke:0.14px currentColor">Miscellaneous Co...</span>
<span class="t" style="left:391.00px;top:10.30px;font-size:8.72px;font-weight:700;color:#1d262b;transform:scaleX(0.8341)">More</span>
<svg class="a" style="left:411.50px;top:11.50px;" width="7" height="5" viewBox="0 0 7 5"><path d="M0.5 0.5 H6.5 L3.5 4 Z" fill="#333"/></svg>
<span class="t" style="left:7.50px;top:35.28px;font-size:15.12px;font-weight:700;color:#6b0a6e;transform:scaleX(0.8427)">C/B Distribution Sets</span>
<div class="a" style="left:812.00px;top:34.40px;width:68.30px;height:18.20px;background:#008a4d;border-radius:9px"></div>
<span class="t" style="left:824.90px;top:39.30px;font-size:8.72px;font-weight:700;color:#fff;transform:scaleX(0.8886)">Options</span>
<svg class="a" style="left:859.50px;top:39.00px;" width="10" height="8" viewBox="0 0 10 8"><path d="M1.2 1.5 L5 5.5 L8.8 1.5" fill="none" stroke="#fff" stroke-width="1.4"/></svg>
<div class="a" style="left:887.40px;top:34.40px;width:75.50px;height:18.20px;background:#008a4d;border-radius:9px"></div>
<span class="t" style="left:903.80px;top:39.50px;font-size:8.72px;font-weight:700;color:#fff;transform:scaleX(0.9013)">Create New</span>
<div class="a" style="left:920.80px;top:67.00px;width:2.50px;height:2.50px;background:#00875a;border-radius:50%"></div>
<span class="t" style="left:926.40px;top:64.60px;font-size:10.61px;font-weight:400;color:#5b6b73;transform:scaleX(0.8342);-webkit-text-stroke:0.17px currentColor">Required</span>
<span class="t" style="left:8.00px;top:77.49px;font-size:11.34px;font-weight:400;color:#263238;transform:scaleX(0.8199);-webkit-text-stroke:0.18px currentColor">Distribution Code</span>
<div class="a" style="left:82.30px;top:81.00px;width:2.50px;height:2.50px;background:#00875a;border-radius:50%"></div>
<div class="a" style="left:7.00px;top:93.00px;width:61.00px;height:18.20px;background:#fff;border:1px solid #7a8f99;border-radius:2px 0 0 2px"></div>
<div class="a" style="left:67.30px;top:93.00px;width:19.70px;height:18.20px;background:#fff;border:1px solid #7a8f99;"></div>
<div class="a" style="left:86.30px;top:93.00px;width:20.20px;height:18.20px;background:#fff;border:1px solid #7a8f99;border-radius:0 2px 2px 0"></div>
<svg class="a" style="left:70.50px;top:96.50px;" width="13" height="11" viewBox="0 0 13 11"><path d="M11 2.5 V7 H2.5" fill="none" stroke="#1f2a30" stroke-width="1.1"/><path d="M4.5 4.8 L2.2 7 L4.5 9.2" fill="none" stroke="#1f2a30" stroke-width="1.1"/></svg>
<svg class="a" style="left:90.50px;top:96.50px;" width="11.5" height="11.5" viewBox="0 0 11.5 11.5"><circle cx="4.83" cy="4.83" r="3.565" fill="none" stroke="#1f2a30" stroke-width="1.1"/><path d="M7.4750000000000005 7.4750000000000005 L10.695 10.695" stroke="#1f2a30" stroke-width="1.1" stroke-linecap="round"/></svg>
<span class="t" style="left:14.80px;top:97.77px;font-size:10.17px;font-weight:400;color:#1f2a30;transform:scaleX(0.8005);-webkit-text-stroke:0.16px currentColor">MEDICA</span>
<div class="a" style="left:118.20px;top:93.00px;width:224.50px;height:18.20px;background:#fff;border:1px solid #7a8f99;border-radius:2px"></div>
<span class="t" style="left:126.00px;top:97.77px;font-size:10.17px;font-weight:400;color:#1f2a30;transform:scaleX(0.8795);-webkit-text-stroke:0.16px currentColor">Medical Aid</span>
<span class="t" style="left:8.00px;top:121.91px;font-size:11.19px;font-weight:400;color:#263238;transform:scaleX(0.8319);-webkit-text-stroke:0.18px currentColor">Distribution Method</span>
<span class="t" style="left:205.40px;top:121.91px;font-size:11.19px;font-weight:400;color:#263238;transform:scaleX(0.8105);-webkit-text-stroke:0.18px currentColor">Total Dist. Amount</span>
<div class="a" style="left:7.00px;top:136.70px;width:105.50px;height:18.30px;background:#fff;border:1px solid #7a8f99;border-radius:2px"></div>
<div class="a" style="left:93.30px;top:136.70px;width:1.00px;height:18.30px;background:#5f7886"></div>
<svg class="a" style="left:97.50px;top:141.00px;" width="11" height="9" viewBox="0 0 11 9"><path d="M1 2 L5.5 6.5 L10 2" fill="none" stroke="#1f2a30" stroke-width="1.2"/></svg>
<span class="t" style="left:14.80px;top:140.77px;font-size:10.17px;font-weight:400;color:#1f2a30;transform:scaleX(0.8525);-webkit-text-stroke:0.16px currentColor">Spread Evenly</span>
<div class="a" style="left:124.70px;top:136.70px;width:68.50px;height:18.30px;background:#fff;border:1px solid #45a97a;border-radius:9px"></div>
<span class="t" style="left:141.60px;top:141.19px;font-size:9.45px;font-weight:700;color:#1c8a5a;transform:scaleX(0.8187)">Calc Dist.</span>
<div class="a" style="left:207.30px;top:136.70px;width:103.60px;height:18.30px;background:#fff;border:1px solid #7a8f99;border-radius:2px"></div>
<span class="t" style="left:266.10px;top:140.77px;font-size:10.17px;font-weight:400;color:#1f2a30;transform:scaleX(0.9402);-webkit-text-stroke:0.16px currentColor">2,078.00</span>
<div class="a" style="left:8.00px;top:165.00px;width:955.00px;height:267.50px;background:#fff;border:1px solid #d6dde1"></div>
<div class="a" style="left:14.00px;top:172.00px;width:55.50px;height:16.00px;background:#fff;border:1px solid #7a8f99;"></div>
<svg class="a" style="left:17.50px;top:175.50px;" width="10" height="10" viewBox="0 0 10 10"><path d="M5 0.5 V9.5 M0.5 5 H9.5" stroke="#1f2a30" stroke-width="1"/></svg>
<span class="t" style="left:31.75px;top:176.26px;font-size:9.01px;font-weight:400;color:#1f2a30;transform:scaleX(0.8445);-webkit-text-stroke:0.14px currentColor">Add Line</span>
<div class="a" style="left:75.20px;top:172.00px;width:63.80px;height:16.00px;background:#e8eaeb;border:1px solid #e2e5e7"></div>
<svg class="a" style="left:80.00px;top:174.50px;" width="10" height="11" viewBox="0 0 10 11"><path d="M1 2.5 H9 M3.5 2.5 V1 H6.5 V2.5 M2 3.5 L2.7 10 H7.3 L8 3.5" fill="none" stroke="#c4cacd" stroke-width="0.9"/></svg>
<span class="t" style="left:93.00px;top:176.26px;font-size:9.01px;font-weight:400;color:#cfd4d7;transform:scaleX(0.8347);-webkit-text-stroke:0.14px currentColor">Delete Line</span>
<div class="a" style="left:144.80px;top:172.00px;width:69.80px;height:16.00px;background:#fff;border:1px solid #7a8f99;"></div>
<svg class="a" style="left:149.50px;top:174.50px;" width="10" height="11" viewBox="0 0 10 11"><path d="M6 1 H2 C1.4 1 1 1.4 1 2 V9.5 C1 10 1.4 10.4 2 10.4 H3" fill="none" stroke="#111" stroke-width="0.9"/><path d="M7.5 3 L4 8.5 L3.5 10.5 L5.5 9.5 L9 4.5 Z" fill="#111"/></svg>
<span class="t" style="left:162.00px;top:176.26px;font-size:9.01px;font-weight:400;color:#1f2a30;transform:scaleX(0.8386);-webkit-text-stroke:0.14px currentColor">Edit Columns</span>
<div class="a" style="left:8.40px;top:195.00px;width:953.60px;height:17.60px;background:#335b6d"></div>
<div class="a" style="left:79.50px;top:195.00px;width:0.80px;height:17.60px;background:#5d7e8d"></div>
<div class="a" style="left:245.40px;top:195.00px;width:0.80px;height:17.60px;background:#5d7e8d"></div>
<div class="a" style="left:411.30px;top:195.00px;width:0.80px;height:17.60px;background:#5d7e8d"></div>
<div class="a" style="left:506.10px;top:195.00px;width:0.80px;height:17.60px;background:#5d7e8d"></div>
<div class="a" style="left:624.60px;top:195.00px;width:0.80px;height:17.60px;background:#5d7e8d"></div>
<div class="a" style="left:832.20px;top:195.00px;width:0.80px;height:17.60px;background:#5d7e8d"></div>
<div class="a" style="left:950.10px;top:195.00px;width:0.80px;height:17.60px;background:#5d7e8d"></div>
<span class="t" style="left:15.00px;top:200.30px;font-size:8.72px;font-weight:700;color:#fff;transform:scaleX(0.8314)">Source</span>
<span class="t" style="left:86.00px;top:200.30px;font-size:8.72px;font-weight:700;color:#fff;transform:scaleX(0.8340)">Source Description</span>
<span class="t" style="left:251.90px;top:200.30px;font-size:8.72px;font-weight:700;color:#fff;transform:scaleX(0.8554)">Default Description</span>
<span class="t" style="left:417.80px;top:200.30px;font-size:8.72px;font-weight:700;color:#fff;transform:scaleX(0.8407)">Account</span>
<span class="t" style="left:513.20px;top:200.30px;font-size:8.72px;font-weight:700;color:#fff;transform:scaleX(0.8164)">Default PU Tax Class</span>
<span class="t" style="left:631.60px;top:200.30px;font-size:8.72px;font-weight:700;color:#fff;transform:scaleX(0.8227)">Default PU Tax Inclusive</span>
<span class="t" style="left:838.70px;top:200.30px;font-size:8.72px;font-weight:700;color:#fff;transform:scaleX(0.8106)">Default SA Tax Class</span>
<div class="a" style="left:8.40px;top:212.60px;width:941.60px;height:19.10px;background:#d9dfe3"></div>
<div class="a" style="left:8.40px;top:231.20px;width:941.60px;height:1.00px;background:#dfe5e8"></div>
<span class="t" style="left:15.00px;top:219.37px;font-size:8.28px;font-weight:700;color:#111;transform:scaleX(0.8537)">MD</span>
<span class="t" style="left:86.00px;top:219.37px;font-size:8.28px;font-weight:700;color:#111;transform:scaleX(0.8761)">Staff Medical Aid</span>
<span class="t" style="left:251.90px;top:219.37px;font-size:8.28px;font-weight:700;color:#111;transform:scaleX(0.8690)">Paul McCleim</span>
<span class="t" style="left:417.80px;top:219.37px;font-size:8.28px;font-weight:700;color:#111;transform:scaleX(1.0218)">2225</span>
<span class="t" style="left:513.50px;top:219.37px;font-size:8.28px;font-weight:700;color:#111;transform:scaleX(0.6400)">1</span>
<span class="t" style="left:631.60px;top:219.37px;font-size:8.28px;font-weight:700;color:#111;transform:scaleX(0.9116)">No</span>
<span class="t" style="left:838.90px;top:219.37px;font-size:8.28px;font-weight:700;color:#111;transform:scaleX(0.6400)">1</span>
<div class="a" style="left:8.40px;top:249.90px;width:941.60px;height:1.00px;background:#dfe5e8"></div>
<span class="t" style="left:15.00px;top:238.47px;font-size:8.28px;font-weight:400;color:#3a3f42;transform:scaleX(0.8537);-webkit-text-stroke:0.13px currentColor">MD</span>
<span class="t" style="left:86.00px;top:238.47px;font-size:8.28px;font-weight:400;color:#3a3f42;transform:scaleX(0.9362);-webkit-text-stroke:0.13px currentColor">Staff Medical Aid</span>
<span class="t" style="left:251.90px;top:238.47px;font-size:8.28px;font-weight:400;color:#3a3f42;transform:scaleX(0.9411);-webkit-text-stroke:0.13px currentColor">Bongani Dlamini</span>
<span class="t" style="left:417.80px;top:238.47px;font-size:8.28px;font-weight:400;color:#3a3f42;transform:scaleX(1.0218);-webkit-text-stroke:0.13px currentColor">2225</span>
<span class="t" style="left:513.50px;top:238.47px;font-size:8.28px;font-weight:400;color:#3a3f42;transform:scaleX(0.6400);-webkit-text-stroke:0.13px currentColor">1</span>
<span class="t" style="left:631.60px;top:238.47px;font-size:8.28px;font-weight:400;color:#3a3f42;transform:scaleX(0.9116);-webkit-text-stroke:0.13px currentColor">No</span>
<span class="t" style="left:838.90px;top:238.47px;font-size:8.28px;font-weight:400;color:#3a3f42;transform:scaleX(0.6400);-webkit-text-stroke:0.13px currentColor">1</span>
<div class="a" style="left:8.40px;top:268.10px;width:941.60px;height:1.00px;background:#dfe5e8"></div>
<span class="t" style="left:15.00px;top:257.17px;font-size:8.28px;font-weight:400;color:#3a3f42;transform:scaleX(0.8537);-webkit-text-stroke:0.13px currentColor">MD</span>
<span class="t" style="left:86.00px;top:257.17px;font-size:8.28px;font-weight:400;color:#3a3f42;transform:scaleX(0.9362);-webkit-text-stroke:0.13px currentColor">Staff Medical Aid</span>
<span class="t" style="left:251.90px;top:257.17px;font-size:8.28px;font-weight:400;color:#3a3f42;transform:scaleX(0.8711);-webkit-text-stroke:0.13px currentColor">Alan Walsh</span>
<span class="t" style="left:417.80px;top:257.17px;font-size:8.28px;font-weight:400;color:#3a3f42;transform:scaleX(1.0218);-webkit-text-stroke:0.13px currentColor">2225</span>
<span class="t" style="left:513.50px;top:257.17px;font-size:8.28px;font-weight:400;color:#3a3f42;transform:scaleX(0.6400);-webkit-text-stroke:0.13px currentColor">1</span>
<span class="t" style="left:631.60px;top:257.17px;font-size:8.28px;font-weight:400;color:#3a3f42;transform:scaleX(0.9116);-webkit-text-stroke:0.13px currentColor">No</span>
<span class="t" style="left:838.90px;top:257.17px;font-size:8.28px;font-weight:400;color:#3a3f42;transform:scaleX(0.6400);-webkit-text-stroke:0.13px currentColor">1</span>
<div class="a" style="left:8.40px;top:286.50px;width:941.60px;height:1.00px;background:#dfe5e8"></div>
<span class="t" style="left:15.00px;top:275.37px;font-size:8.28px;font-weight:400;color:#3a3f42;transform:scaleX(0.8537);-webkit-text-stroke:0.13px currentColor">MD</span>
<span class="t" style="left:86.00px;top:275.37px;font-size:8.28px;font-weight:400;color:#3a3f42;transform:scaleX(0.9362);-webkit-text-stroke:0.13px currentColor">Staff Medical Aid</span>
<span class="t" style="left:251.90px;top:275.37px;font-size:8.28px;font-weight:400;color:#3a3f42;transform:scaleX(0.9289);-webkit-text-stroke:0.13px currentColor">Laura Mills</span>
<span class="t" style="left:417.80px;top:275.37px;font-size:8.28px;font-weight:400;color:#3a3f42;transform:scaleX(1.0218);-webkit-text-stroke:0.13px currentColor">2225</span>
<span class="t" style="left:513.50px;top:275.37px;font-size:8.28px;font-weight:400;color:#3a3f42;transform:scaleX(0.6400);-webkit-text-stroke:0.13px currentColor">1</span>
<span class="t" style="left:631.60px;top:275.37px;font-size:8.28px;font-weight:400;color:#3a3f42;transform:scaleX(0.9116);-webkit-text-stroke:0.13px currentColor">No</span>
<span class="t" style="left:838.90px;top:275.37px;font-size:8.28px;font-weight:400;color:#3a3f42;transform:scaleX(0.6400);-webkit-text-stroke:0.13px currentColor">1</span>
<div class="a" style="left:8.40px;top:305.10px;width:941.60px;height:1.00px;background:#dfe5e8"></div>
<span class="t" style="left:15.00px;top:293.77px;font-size:8.28px;font-weight:400;color:#3a3f42;transform:scaleX(0.8537);-webkit-text-stroke:0.13px currentColor">MD</span>
<span class="t" style="left:86.00px;top:293.77px;font-size:8.28px;font-weight:400;color:#3a3f42;transform:scaleX(0.9362);-webkit-text-stroke:0.13px currentColor">Staff Medical Aid</span>
<span class="t" style="left:251.90px;top:293.77px;font-size:8.28px;font-weight:400;color:#3a3f42;transform:scaleX(0.9602);-webkit-text-stroke:0.13px currentColor">Ian Smitherton</span>
<span class="t" style="left:417.80px;top:293.77px;font-size:8.28px;font-weight:400;color:#3a3f42;transform:scaleX(1.0218);-webkit-text-stroke:0.13px currentColor">2225</span>
<span class="t" style="left:513.50px;top:293.77px;font-size:8.28px;font-weight:400;color:#3a3f42;transform:scaleX(0.6400);-webkit-text-stroke:0.13px currentColor">1</span>
<span class="t" style="left:631.60px;top:293.77px;font-size:8.28px;font-weight:400;color:#3a3f42;transform:scaleX(0.9116);-webkit-text-stroke:0.13px currentColor">No</span>
<span class="t" style="left:838.90px;top:293.77px;font-size:8.28px;font-weight:400;color:#3a3f42;transform:scaleX(0.6400);-webkit-text-stroke:0.13px currentColor">1</span>
<div class="a" style="left:8.40px;top:323.50px;width:941.60px;height:1.00px;background:#dfe5e8"></div>
<span class="t" style="left:15.00px;top:312.37px;font-size:8.28px;font-weight:400;color:#3a3f42;transform:scaleX(0.8537);-webkit-text-stroke:0.13px currentColor">MD</span>
<span class="t" style="left:86.00px;top:312.37px;font-size:8.28px;font-weight:400;color:#3a3f42;transform:scaleX(0.9362);-webkit-text-stroke:0.13px currentColor">Staff Medical Aid</span>
<span class="t" style="left:251.90px;top:312.37px;font-size:8.28px;font-weight:400;color:#3a3f42;transform:scaleX(0.9189);-webkit-text-stroke:0.13px currentColor">Sipho Magubane</span>
<span class="t" style="left:417.80px;top:312.37px;font-size:8.28px;font-weight:400;color:#3a3f42;transform:scaleX(1.0218);-webkit-text-stroke:0.13px currentColor">2225</span>
<span class="t" style="left:513.50px;top:312.37px;font-size:8.28px;font-weight:400;color:#3a3f42;transform:scaleX(0.6400);-webkit-text-stroke:0.13px currentColor">1</span>
<span class="t" style="left:631.60px;top:312.37px;font-size:8.28px;font-weight:400;color:#3a3f42;transform:scaleX(0.9116);-webkit-text-stroke:0.13px currentColor">No</span>
<span class="t" style="left:838.90px;top:312.37px;font-size:8.28px;font-weight:400;color:#3a3f42;transform:scaleX(0.6400);-webkit-text-stroke:0.13px currentColor">1</span>
<div class="a" style="left:8.40px;top:342.10px;width:941.60px;height:1.00px;background:#dfe5e8"></div>
<span class="t" style="left:15.00px;top:330.77px;font-size:8.28px;font-weight:400;color:#3a3f42;transform:scaleX(0.8537);-webkit-text-stroke:0.13px currentColor">MD</span>
<span class="t" style="left:86.00px;top:330.77px;font-size:8.28px;font-weight:400;color:#3a3f42;transform:scaleX(0.9362);-webkit-text-stroke:0.13px currentColor">Staff Medical Aid</span>
<span class="t" style="left:251.90px;top:330.77px;font-size:8.28px;font-weight:400;color:#3a3f42;transform:scaleX(0.9277);-webkit-text-stroke:0.13px currentColor">Emma Dlamini</span>
<span class="t" style="left:417.80px;top:330.77px;font-size:8.28px;font-weight:400;color:#3a3f42;transform:scaleX(1.0218);-webkit-text-stroke:0.13px currentColor">2225</span>
<span class="t" style="left:513.50px;top:330.77px;font-size:8.28px;font-weight:400;color:#3a3f42;transform:scaleX(0.6400);-webkit-text-stroke:0.13px currentColor">1</span>
<span class="t" style="left:631.60px;top:330.77px;font-size:8.28px;font-weight:400;color:#3a3f42;transform:scaleX(0.9116);-webkit-text-stroke:0.13px currentColor">No</span>
<span class="t" style="left:838.90px;top:330.77px;font-size:8.28px;font-weight:400;color:#3a3f42;transform:scaleX(0.6400);-webkit-text-stroke:0.13px currentColor">1</span>
<div class="a" style="left:8.40px;top:361.10px;width:941.60px;height:1.00px;background:#dfe5e8"></div>
<span class="t" style="left:15.00px;top:349.37px;font-size:8.28px;font-weight:400;color:#3a3f42;transform:scaleX(0.8537);-webkit-text-stroke:0.13px currentColor">MD</span>
<span class="t" style="left:86.00px;top:349.37px;font-size:8.28px;font-weight:400;color:#3a3f42;transform:scaleX(0.9362);-webkit-text-stroke:0.13px currentColor">Staff Medical Aid</span>
<span class="t" style="left:251.90px;top:349.37px;font-size:8.28px;font-weight:400;color:#3a3f42;transform:scaleX(0.8922);-webkit-text-stroke:0.13px currentColor">A Sanderson</span>
<span class="t" style="left:417.80px;top:349.37px;font-size:8.28px;font-weight:400;color:#3a3f42;transform:scaleX(1.0218);-webkit-text-stroke:0.13px currentColor">2225</span>
<span class="t" style="left:513.50px;top:349.37px;font-size:8.28px;font-weight:400;color:#3a3f42;transform:scaleX(0.6400);-webkit-text-stroke:0.13px currentColor">1</span>
<span class="t" style="left:631.60px;top:349.37px;font-size:8.28px;font-weight:400;color:#3a3f42;transform:scaleX(0.9116);-webkit-text-stroke:0.13px currentColor">No</span>
<span class="t" style="left:838.90px;top:349.37px;font-size:8.28px;font-weight:400;color:#3a3f42;transform:scaleX(0.6400);-webkit-text-stroke:0.13px currentColor">1</span>
<div class="a" style="left:950.00px;top:212.60px;width:12.00px;height:198.40px;background:#f1f1f1"></div>
<svg class="a" style="left:953.00px;top:216.00px;" width="6" height="5" viewBox="0 0 6 5"><path d="M0.5 4 L3 1 L5.5 4 Z" fill="#a4a4a4"/></svg>
<svg class="a" style="left:953.00px;top:404.00px;" width="6" height="5" viewBox="0 0 6 5"><path d="M0.5 1 L3 4 L5.5 1 Z" fill="#a4a4a4"/></svg>
<div class="a" style="left:8.40px;top:410.50px;width:953.60px;height:1.00px;background:#d5dde1"></div>
<div class="a" style="left:14.00px;top:413.40px;width:17.00px;height:15.60px;background:#eef0f1"></div>
<div class="a" style="left:37.60px;top:413.40px;width:17.10px;height:15.60px;background:#eef0f1"></div>
<div class="a" style="left:139.80px;top:413.40px;width:17.10px;height:15.60px;background:#eef0f1"></div>
<div class="a" style="left:162.90px;top:413.40px;width:17.30px;height:15.60px;background:#eef0f1"></div>
<svg class="a" style="left:18.00px;top:417.00px;" width="9" height="8" viewBox="0 0 9 8"><rect x="1" y="1" width="1" height="6" fill="#b5bbbe"/><path d="M7.5 1 V7 L3 4 Z" fill="#b5bbbe"/></svg>
<svg class="a" style="left:42.00px;top:417.00px;" width="9" height="8" viewBox="0 0 9 8"><path d="M6 1 V7 L2.5 4 Z" fill="#b5bbbe"/></svg>
<svg class="a" style="left:144.00px;top:417.00px;" width="9" height="8" viewBox="0 0 9 8"><path d="M3 1 V7 L6.5 4 Z" fill="#b5bbbe"/></svg>
<svg class="a" style="left:167.00px;top:417.00px;" width="9" height="8" viewBox="0 0 9 8"><path d="M1.5 1 V7 L6 4 Z" fill="#b5bbbe"/><rect x="7" y="1" width="1" height="6" fill="#b5bbbe"/></svg>
<span class="t" style="left:65.80px;top:418.60px;font-size:8.72px;font-weight:400;color:#333;transform:scaleX(0.8677);-webkit-text-stroke:0.14px currentColor">Page</span>
<div class="a" style="left:86.90px;top:413.40px;width:24.00px;height:15.60px;background:#fff;border:1px solid #5f7886"></div>
<span class="t" style="left:100.60px;top:418.60px;font-size:8.72px;font-weight:400;color:#333;transform:scaleX(0.5600);-webkit-text-stroke:0.14px currentColor">1</span>
<span class="t" style="left:114.70px;top:418.60px;font-size:8.72px;font-weight:400;color:#333;transform:scaleX(0.9052);-webkit-text-stroke:0.14px currentColor">of 1</span>
<span class="t" style="left:875.90px;top:418.70px;font-size:8.72px;font-weight:400;color:#333;transform:scaleX(0.8811);-webkit-text-stroke:0.14px currentColor">1 - 8 of 8 Items</span>
<div class="a" style="left:939.00px;top:413.70px;width:17.00px;height:16.10px;background:#fff;border:1px solid #7a8f99"></div>
<svg class="a" style="left:941.50px;top:415.80px;" width="12" height="12" viewBox="0 0 12 12"><path d="M9 3.5 A3.8 3.8 0 1 0 10 6" fill="none" stroke="#1f2a30" stroke-width="1.1"/><path d="M6.8 1.5 L9.3 3.4 L7.2 5.4" fill="none" stroke="#1f2a30" stroke-width="1.1"/></svg>
<div class="a" style="left:8.00px;top:444.50px;width:954.00px;height:1.00px;background:#d5dde1"></div>
<div class="a" style="left:727.20px;top:458.00px;width:52.80px;height:18.20px;background:#fff;border:1px solid #45a97a;border-radius:9px"></div>
<span class="t" style="left:744.10px;top:463.21px;font-size:9.30px;font-weight:700;color:#1c8a5a;transform:scaleX(0.8681)">Print</span>
<div class="a" style="left:786.60px;top:458.00px;width:52.60px;height:18.20px;background:#008a4d;border-radius:9px"></div>
<span class="t" style="left:803.50px;top:463.21px;font-size:9.30px;font-weight:700;color:#fff;transform:scaleX(0.8217)">Save</span>
<div class="a" style="left:845.70px;top:458.00px;width:57.30px;height:18.20px;background:#008a4d;border-radius:9px"></div>
<span class="t" style="left:861.60px;top:463.21px;font-size:9.30px;font-weight:700;color:#fff;transform:scaleX(0.8906)">Delete</span>
<div class="a" style="left:909.50px;top:458.00px;width:53.40px;height:18.20px;background:#008a4d;border-radius:9px"></div>
<span class="t" style="left:925.90px;top:463.21px;font-size:9.30px;font-weight:700;color:#fff;transform:scaleX(0.7993)">Close</span>
<span class="t" style="left:7.50px;top:480.37px;font-size:8.28px;font-weight:400;color:#333;transform:scaleX(0.7918);-webkit-text-stroke:0.13px currentColor">Copyright© 2024 Peresoft Software v6.01</span>
</div>
</body></html>
